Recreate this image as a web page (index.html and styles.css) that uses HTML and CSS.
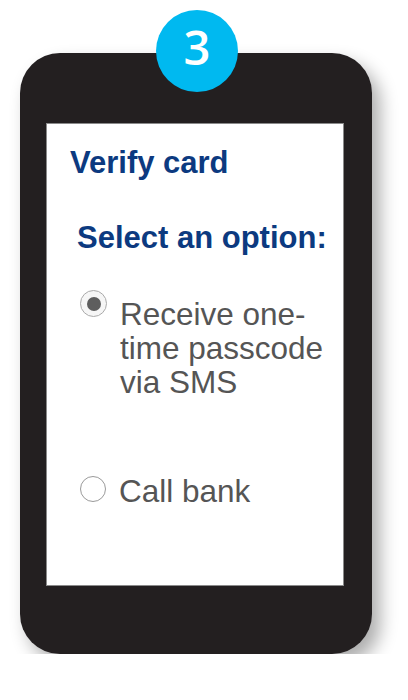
FILE: index.html
```html
<!DOCTYPE html>
<html lang="en">

<head>
    <meta charset="UTF-8">
    <meta name="viewport" content="width=device-width, initial-scale=1.0">
    <title>Verify card</title>
    <link rel="stylesheet" href="styles.css">
</head>

<body>

    <div class="stage">
        <div class="phone">
            <div class="badge">3</div>

            <div class="screen">
                <h1 class="title">Verify card</h1>
                <h2 class="prompt">Select an option:</h2>

                <label class="option option-sms">
                    <span class="radio radio-on"></span>
                    <span class="option-text">Receive one-time passcode via SMS</span>
                </label>

                <label class="option option-call">
                    <span class="radio"></span>
                    <span class="option-text">Call bank</span>
                </label>
            </div>
        </div>
    </div>

</body>

</html>
```

FILE: styles.css
```css
body {
    margin: 0;
    padding: 0;
    background-color: #fff;
    font-family: "Liberation Sans", Arial, sans-serif;
}

.stage {
    padding: 53px 0 0 20px;
}

.phone {
    position: relative;
    box-sizing: border-box;
    width: 352px;
    height: 601px;
    padding: 70px 28px 0 26px;
    background-color: #231f20;
    border-radius: 40px;
    box-shadow: 8px 10px 18px rgba(0, 0, 0, 0.33);
}

.badge {
    position: absolute;
    top: -43px;
    left: 136px;
    width: 82px;
    height: 82px;
    border-radius: 50%;
    background-color: #00b9f0;
    color: #fff;
    font-family: "Open Sans", sans-serif;
    font-size: 47px;
    font-weight: 600;
    line-height: 74px;
    text-align: center;
}

.screen {
    box-sizing: border-box;
    width: 298px;
    height: 463px;
    padding: 21px 0 0 23px;
    background-color: #fff;
    border: 1px solid #8a8a8a;
}

.title {
    margin: 0;
    font-size: 31px;
    line-height: 36px;
    font-weight: bold;
    color: #0c3a80;
}

.prompt {
    margin: 39px 0 0 7px;
    font-size: 31px;
    line-height: 36px;
    font-weight: bold;
    color: #0c3a80;
}

.option {
    display: flex;
    align-items: flex-start;
    gap: 13px;
    padding-left: 10px;
    font-size: 31.5px;
    line-height: 34px;
    color: #555;
}

.option-sms {
    margin-top: 41px;
}

.option-call {
    margin-top: 75px;
}

.option-text {
    width: 212px;
}

.radio {
    flex: none;
    box-sizing: border-box;
    width: 26px;
    height: 26px;
    margin-top: 2px;
    border: 1.5px solid #9a9a9a;
    border-radius: 50%;
    background-color: #fff;
    display: flex;
    align-items: center;
    justify-content: center;
}

.radio-on {
    margin-top: -7px;
    width: 27px;
    height: 27px;
    border-color: #aaa;
    background-color: #f6f6f6;
}

.radio-on::after {
    content: "";
    width: 14px;
    height: 14px;
    border-radius: 50%;
    background-color: #5e5e5e;
}
```
